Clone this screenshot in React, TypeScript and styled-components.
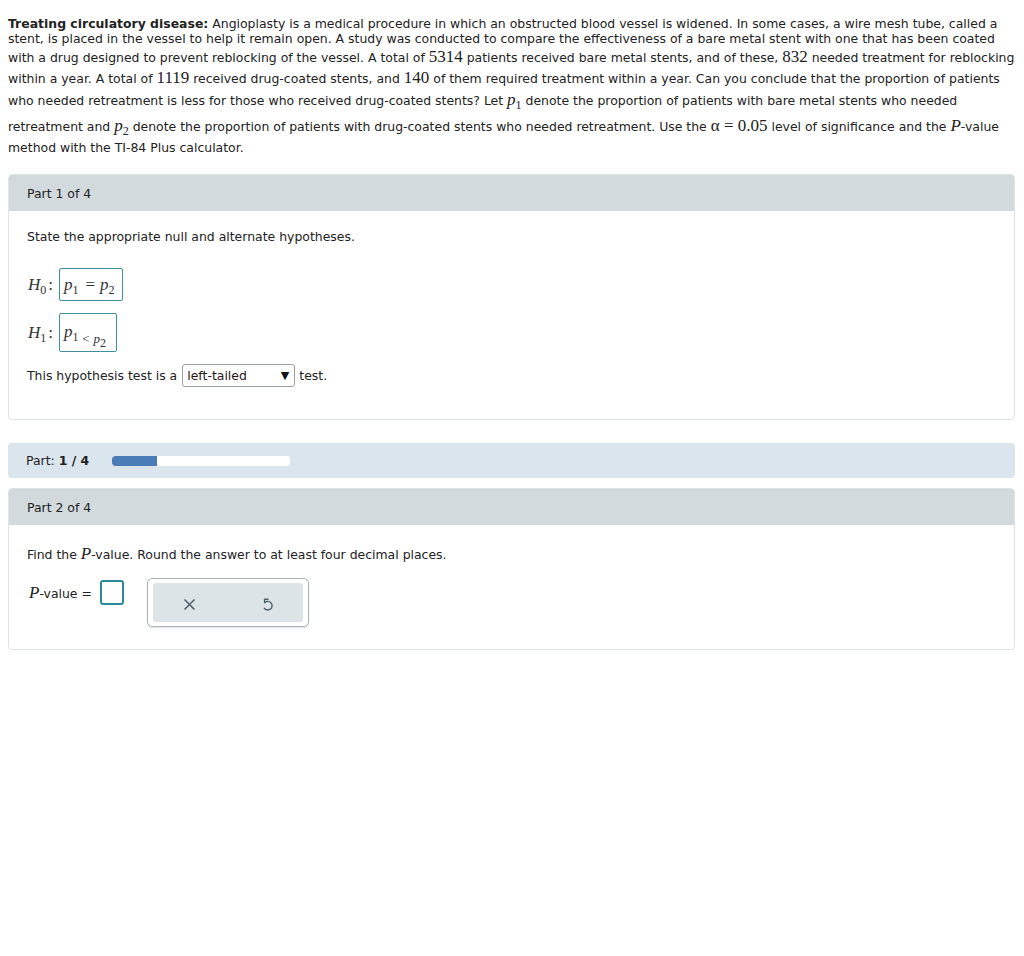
import React from "react";
import styled, { createGlobalStyle } from "styled-components";

const Global = createGlobalStyle`
  html, body { margin: 0; padding: 0; background: #fff; }
  body { font-family: "DejaVu Sans", Verdana, sans-serif; font-size: 12.45px; color: #222; }
`;

const Page = styled.div`
  padding: 8px 9px 8px 8px;
`;

const Problem = styled.div`
  padding-top: 8px;
  margin-bottom: 18px;
`;

const Line = styled.div<{ $h: number }>`
  height: ${(p) => p.$h}px;
  line-height: ${(p) => p.$h}px;
  white-space: nowrap;
`;

const Num = styled.span`
  font-family: "Liberation Serif", "Times New Roman", serif;
  font-size: 17px;
`;

const MI = styled.span`
  font-family: "Liberation Serif", "Times New Roman", serif;
  font-style: italic;
  font-size: 17px;
`;

const Sub = styled.sub`
  font-family: "Liberation Serif", serif;
  font-style: normal;
  font-size: 12px;
  vertical-align: -4px;
  line-height: 0;
`;

const Card = styled.section`
  border: 1px solid #dde3e6;
  border-radius: 4px;
  overflow: hidden;
  background: #fff;
`;

const CardHeader = styled.div`
  background: #d2dadd;
  height: 36px;
  display: flex;
  align-items: center;
  padding-left: 18px;
`;

const CardBody = styled.div<{ $pt: number; $pb: number }>`
  padding: ${(p) => p.$pt}px 18px ${(p) => p.$pb}px 18px;
`;

const Prompt = styled.div`
  height: 17px;
  line-height: 17px;
`;

const HypRow = styled.div<{ $mt: number }>`
  display: flex;
  align-items: center;
  margin-top: ${(p) => p.$mt}px;
`;

const HLabel = styled.span`
  font-family: "Liberation Serif", serif;
  font-style: italic;
  font-size: 17px;
  width: 31px;
  padding-left: 1px;
  white-space: nowrap;
  color: #333;
`;

const Colon = styled.span`
  font-style: normal;
  margin-left: 2px;
`;

const AnswerBox = styled.span<{ $w: number; $h: number }>`
  box-sizing: border-box;
  width: ${(p) => p.$w}px;
  height: ${(p) => p.$h}px;
  border: 1px solid #3f8f9c;
  border-radius: 2px;
  display: inline-flex;
  align-items: center;
  padding-left: 4px;
  font-family: "Liberation Serif", serif;
  font-style: italic;
  font-size: 17px;
  color: #333;
  white-space: nowrap;
`;

const Expr = styled.span`
  line-height: 20px;
`;

const Op = styled.span`
  font-style: normal;
  margin: 0 5px 0 7px;
`;

const Small = styled.span`
  font-size: 13px;
  position: relative;
  top: 6px;
  margin-left: 3px;
`;

const TestRow = styled.div`
  display: flex;
  align-items: center;
  margin-top: 12px;
  gap: 4px;
`;

const Select = styled.span`
  box-sizing: border-box;
  width: 113px;
  height: 23px;
  border: 1px solid #9aa0a3;
  border-radius: 3px;
  display: inline-flex;
  align-items: center;
  justify-content: space-between;
  padding: 0 5px 0 4px;
  color: #2a1414;
  margin-left: 1px;
`;

const Arrow = styled.span`
  font-size: 11px;
  color: #111;
`;

const Progress = styled.div`
  margin: 23px 0 10px;
  height: 35px;
  background: #dbe5ee;
  border-radius: 4px;
  display: flex;
  align-items: center;
  padding-left: 18px;
`;

const ProgLabel = styled.span`
  width: 86px;
  b { font-weight: bold; }
`;

const Track = styled.div`
  width: 178px;
  height: 10px;
  background: #fff;
  border-radius: 3px;
  overflow: hidden;
`;

const Fill = styled.div`
  height: 100%;
  background: #4a7db8;
  border-radius: 3px 0 0 3px;
`;

const PRow = styled.div`
  display: flex;
  align-items: flex-start;
  margin-top: 16px;
`;

const PLabel = styled.span`
  margin-top: 5px;
  margin-left: 2px;
  width: 71px;
  white-space: nowrap;
`;

const InputBox = styled.span`
  box-sizing: border-box;
  width: 24px;
  height: 25px;
  margin-top: 2px;
  border: 2px solid #2a8a9c;
  border-radius: 3px;
`;

const Toolbar = styled.div`
  box-sizing: border-box;
  margin-left: 23px;
  width: 162px;
  height: 49px;
  border: 1px solid #a9b4ba;
  border-radius: 5px;
  padding: 4px 5px;
  box-shadow: 0 1px 2px rgba(0,0,0,0.12);
  background: #fff;
`;

const ToolInner = styled.div`
  height: 100%;
  background: #dde4e7;
  border-radius: 3px;
  display: flex;
  align-items: center;
  justify-content: space-between;
  padding: 0 30px;
  svg { margin-top: 4px; }
`;

export default function App() {
  return (
    <>
      <Global />
      <Page>
        <Problem>
          <Line $h={15}>
            <b>Treating circulatory disease:</b> Angioplasty is a medical procedure in which an obstructed blood vessel is widened. In some cases, a wire mesh tube, called a
          </Line>
          <Line $h={15}>
            stent, is placed in the vessel to help it remain open. A study was conducted to compare the effectiveness of a bare metal stent with one that has been coated
          </Line>
          <Line $h={22}>
            with a drug designed to prevent reblocking of the vessel. A total of <Num>5314</Num> patients received bare metal stents, and of these, <Num>832</Num> needed treatment for reblocking
          </Line>
          <Line $h={20}>
            within a year. A total of <Num>1119</Num> received drug-coated stents, and <Num>140</Num> of them required treatment within a year. Can you conclude that the proportion of patients
          </Line>
          <Line $h={24}>
            who needed retreatment is less for those who received drug-coated stents? Let <MI>p<Sub>1</Sub></MI> denote the proportion of patients with bare metal stents who needed
          </Line>
          <Line $h={28}>
            retreatment and <MI>p<Sub>2</Sub></MI> denote the proportion of patients with drug-coated stents who needed retreatment. Use the <Num>α = 0.05</Num> level of significance and the <MI>P</MI>-value
          </Line>
          <Line $h={16}>method with the TI-84 Plus calculator.</Line>
        </Problem>

        <Card>
          <CardHeader>Part 1 of 4</CardHeader>
          <CardBody $pt={17} $pb={32}>
            <Prompt>State the appropriate null and alternate hypotheses.</Prompt>
            <HypRow $mt={23}>
              <HLabel>H<Sub>0</Sub><Colon>:</Colon></HLabel>
              <AnswerBox $w={64} $h={33}>
                <Expr>
                  p<Sub>1</Sub><Op>=</Op>p<Sub>2</Sub>
                </Expr>
              </AnswerBox>
            </HypRow>
            <HypRow $mt={12}>
              <HLabel>H<Sub>1</Sub><Colon>:</Colon></HLabel>
              <AnswerBox $w={58} $h={39}>
                <Expr>
                  p<Sub>1</Sub>
                  <Small>&lt; p<Sub>2</Sub></Small>
                </Expr>
              </AnswerBox>
            </HypRow>
            <TestRow>
              <span>This hypothesis test is a</span>
              <Select>
                <span>left-tailed</span>
                <Arrow>▼</Arrow>
              </Select>
              <span>test.</span>
            </TestRow>
          </CardBody>
        </Card>

        <Progress>
          <ProgLabel>
            Part: <b>1 / 4</b>
          </ProgLabel>
          <Track>
            <Fill style={{ width: "25%" }} />
          </Track>
        </Progress>

        <Card>
          <CardHeader>Part 2 of 4</CardHeader>
          <CardBody $pt={20} $pb={22}>
            <Prompt>
              Find the <MI>P</MI>-value. Round the answer to at least four decimal places.
            </Prompt>
            <PRow>
              <PLabel>
                <MI>P</MI>-value =
              </PLabel>
              <InputBox />
              <Toolbar>
                <ToolInner>
                  <svg width="13" height="13" viewBox="0 0 13 13">
                    <path d="M1.5 1.5 L11.5 11.5 M11.5 1.5 L1.5 11.5" stroke="#4a5f69" strokeWidth="1.5" fill="none" />
                  </svg>
                  <svg width="12" height="15" viewBox="0 0 12 15">
                    <path d="M7 2.2 H3.6 V5.6" stroke="#4a5f69" strokeWidth="1.4" fill="none" strokeLinecap="round" strokeLinejoin="round" />
                    <path d="M3.8 5.6 A4.3 4.3 0 1 1 3.3 11.2" stroke="#4a5f69" strokeWidth="1.4" fill="none" strokeLinecap="round" />
                  </svg>
                </ToolInner>
              </Toolbar>
            </PRow>
          </CardBody>
        </Card>
      </Page>
    </>
  );
}
